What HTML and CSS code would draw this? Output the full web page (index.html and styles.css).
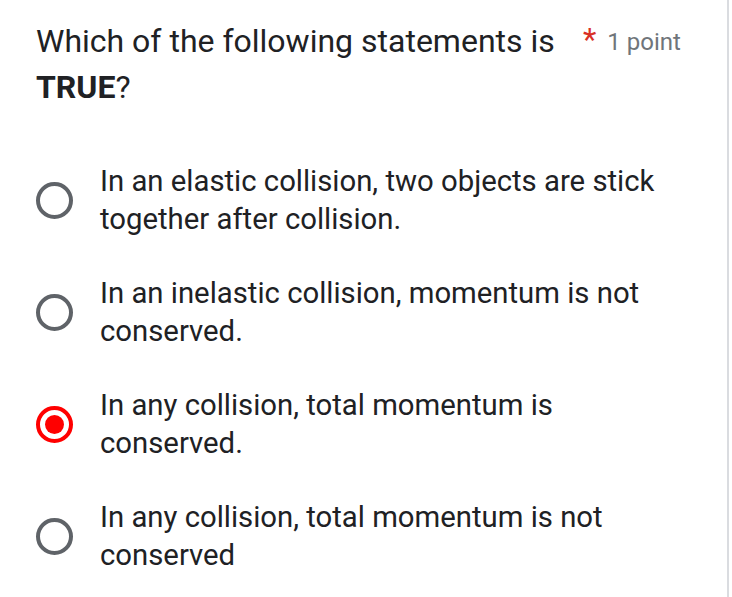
FILE: index.html
```html
<!DOCTYPE html>
<html lang="en">
<head>
  <meta charset="UTF-8" />
  <meta name="viewport" content="width=device-width, initial-scale=1.0"/>
  <title>Question</title>
  <link rel="stylesheet" href="styles.css">
</head>
<body>
  <div class="card">
    <div class="question-head">
      <div class="question-title">Which of the following statements is <strong>TRUE</strong>?</div>
      <span class="required">*</span>
      <span class="points">1 point</span>
    </div>

    <div class="options">
      <label class="option">
        <span class="radio"></span>
        <span class="option-text">In an elastic collision, two objects are stick together after collision.</span>
      </label>
      <label class="option">
        <span class="radio"></span>
        <span class="option-text">In an inelastic collision, momentum is not conserved.</span>
      </label>
      <label class="option">
        <span class="radio checked"></span>
        <span class="option-text">In any collision, total momentum is conserved.</span>
      </label>
      <label class="option">
        <span class="radio"></span>
        <span class="option-text">In any collision, total momentum is not conserved</span>
      </label>
    </div>
  </div>
</body>
</html>
```

FILE: styles.css
```css
body {
  margin: 0;
  background: #fff;
  font-family: Roboto, 'Noto Sans', sans-serif;
  color: #202124;
}
.card {
  width: 729px;
  height: 597px;
  box-sizing: border-box;
  border-right: 2px solid #dadce0;
  padding: 18px 0 0 36px;
  overflow: hidden;
}
.question-head {
  display: flex;
  align-items: flex-start;
}
.question-title {
  width: 540px;
  font-size: 32px;
  line-height: 46px;
}
.question-title strong {
  font-weight: 700;
}
.required {
  margin-left: 7px;
  color: #d93025;
  font-size: 31px;
  line-height: 44px;
}
.points {
  margin-left: 11px;
  color: #70757a;
  font-size: 24px;
  line-height: 48px;
}
.options {
  display: flex;
  flex-direction: column;
  gap: 36px;
  margin-top: 52px;
}
.option {
  display: flex;
  align-items: center;
}
.radio {
  flex: none;
  width: 37px;
  height: 37px;
  box-sizing: border-box;
  border: 4.5px solid #5f6368;
  border-radius: 50%;
  display: flex;
  align-items: center;
  justify-content: center;
}
.radio.checked {
  border-color: #ff0000;
}
.radio.checked::after {
  content: "";
  width: 19px;
  height: 19px;
  border-radius: 50%;
  background: #ff0000;
}
.option-text {
  margin-left: 27px;
  width: 580px;
  font-size: 29.3px;
  line-height: 38px;
}
```
